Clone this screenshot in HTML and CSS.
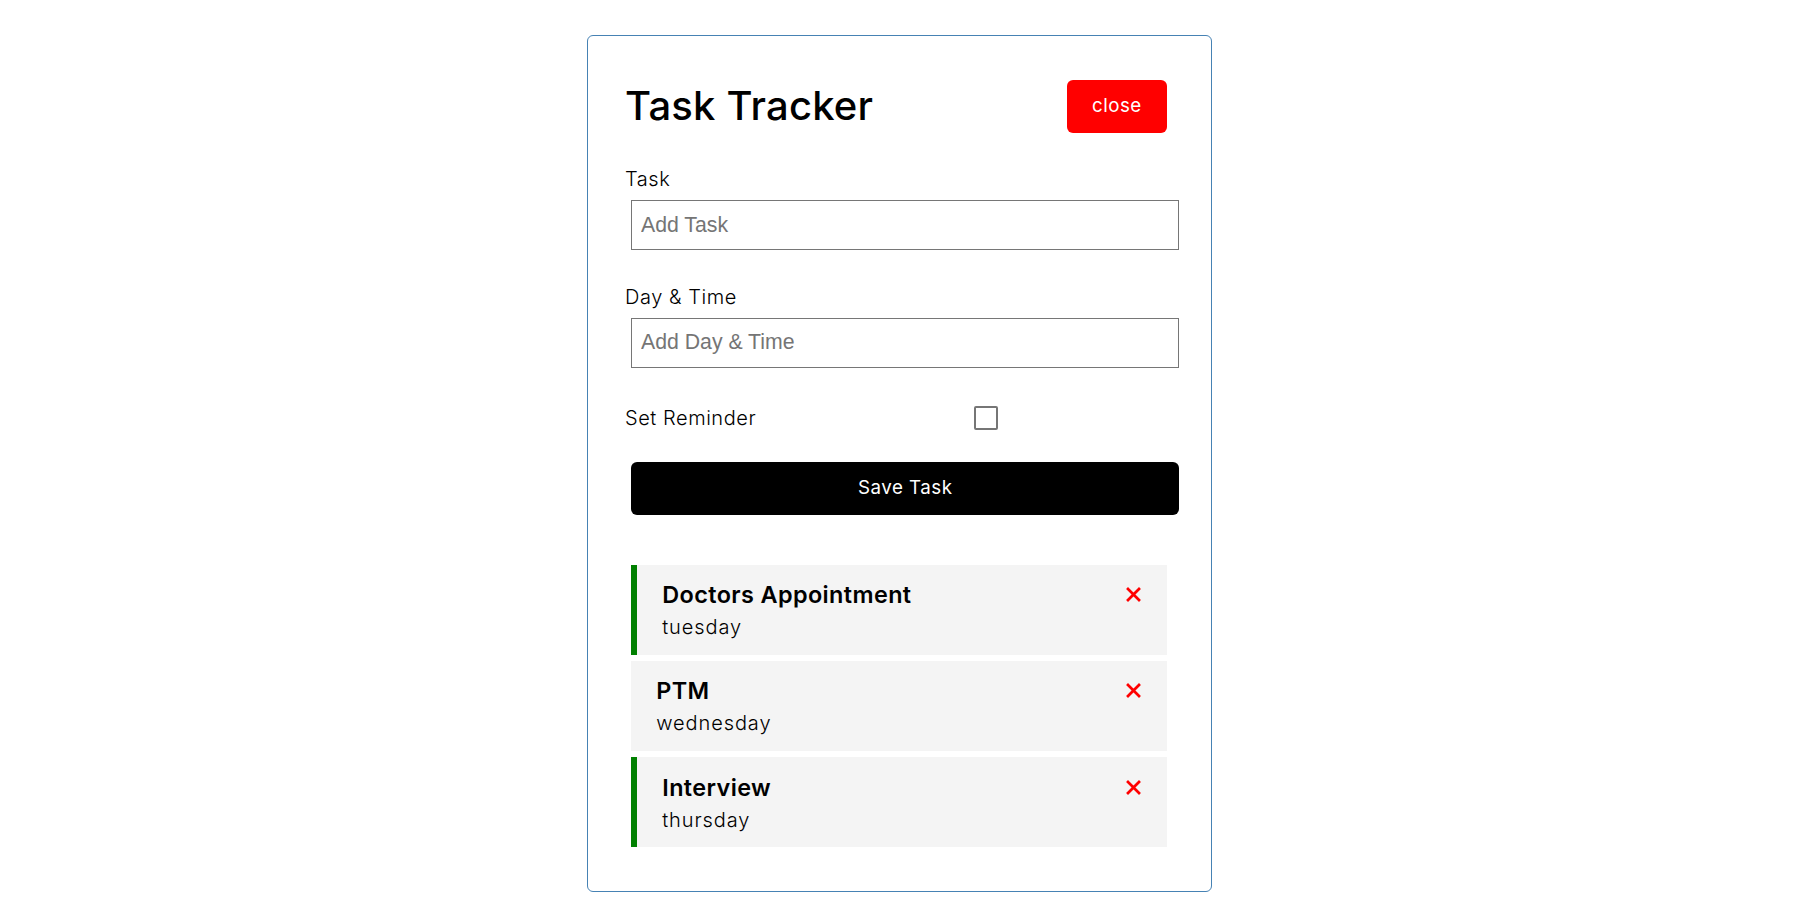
FILE: index.html
```html
<!DOCTYPE html>
<html lang="en">
<head>
<meta charset="utf-8">
<title>Task Tracker</title>
<link rel="stylesheet" href="styles.css">
</head>
<body>
<div class="container">
  <header class="header">
    <h1 class="title">Task Tracker</h1>
    <button class="btn btn-close" type="button">close</button>
  </header>

  <form class="add-form">
    <div class="form-control">
      <label class="field-label" for="task">Task</label>
      <input class="text-input" id="task" type="text" placeholder="Add Task">
    </div>
    <div class="form-control">
      <label class="field-label" for="day">Day &amp; Time</label>
      <input class="text-input" id="day" type="text" placeholder="Add Day &amp; Time">
    </div>
    <div class="form-control form-control-check">
      <label class="field-label check-label" for="rem">Set Reminder</label>
      <span class="check-wrap"><input class="check" id="rem" type="checkbox"></span>
    </div>
    <button class="btn btn-block" type="submit">Save Task</button>
  </form>

  <div class="tasks">
    <div class="task reminder">
      <h3 class="task-title">Doctors Appointment
        <svg class="del" viewBox="0 0 15 15" aria-hidden="true"><path d="M2 2L13 13M13 2L2 13"/></svg>
      </h3>
      <p class="task-day">tuesday</p>
    </div>
    <div class="task">
      <h3 class="task-title">PTM
        <svg class="del" viewBox="0 0 15 15" aria-hidden="true"><path d="M2 2L13 13M13 2L2 13"/></svg>
      </h3>
      <p class="task-day">wednesday</p>
    </div>
    <div class="task reminder">
      <h3 class="task-title">Interview
        <svg class="del" viewBox="0 0 15 15" aria-hidden="true"><path d="M2 2L13 13M13 2L2 13"/></svg>
      </h3>
      <p class="task-day">thursday</p>
    </div>
  </div>
</div>
</body>
</html>
```

FILE: styles.css
```css
* {
  box-sizing: border-box;
  margin: 0;
  padding: 0;
}

body {
  font-family: Inter, "Open Sans", sans-serif;
  color: #000;
  background: #fff;
  padding-right: 11px;
}

.container {
  width: 625px;
  margin: 35px auto 0;
  min-height: 375px;
  border: 1px solid #4682b4;
  border-radius: 6px;
  padding: 37.5px;
  overflow: auto;
}

.header {
  display: flex;
  justify-content: space-between;
  align-items: center;
  margin-bottom: 25px;
}

.title {
  font-size: 40px;
  line-height: 60px;
  font-weight: 500;
  letter-spacing: 0.2px;
}

.btn {
  display: inline-block;
  background: #000;
  color: #fff;
  border: none;
  padding: 12.5px 25px;
  margin: 6.25px;
  border-radius: 6px;
  font-family: inherit;
  font-size: 18.75px;
  line-height: 28px;
  letter-spacing: 0.5px;
  cursor: pointer;
}

.btn-close {
  background: #ff0000;
}

.btn-block {
  display: block;
  width: 100%;
}

.add-form {
  margin-bottom: 50px;
}

.form-control {
  display: flow-root;
  margin: 25px 0;
}

.field-label {
  display: block;
  font-size: 20px;
  line-height: 30px;
  font-weight: 300;
  letter-spacing: 0.55px;
}

.text-input {
  display: block;
  width: 100%;
  height: 50px;
  margin: 6.25px;
  padding: 3.75px 8.75px;
  border: 1px solid #767676;
  font-family: "Liberation Sans", Arial, sans-serif;
  font-size: 21.25px;
  color: #000;
  background: #fff;
}

.text-input::placeholder {
  color: #757575;
}

.form-control-check {
  display: flex;
  align-items: center;
  justify-content: space-between;
}

.check-label {
  flex: 1;
}

.check-wrap {
  flex: 2;
  display: flex;
  justify-content: center;
  align-items: center;
  height: 25px;
  margin: 6.25px;
}

.check {
  appearance: none;
  -webkit-appearance: none;
  width: 24px;
  height: 24px;
  border: 2px solid #767676;
  border-radius: 2px;
  background: #fff;
  margin: 0 4px 0 0;
}

.task {
  background: #f4f4f4;
  margin: 6.25px;
  padding: 12.5px 25px;
  cursor: pointer;
}

.task.reminder {
  border-left: 6.25px solid #008000;
}

.task-title {
  display: flex;
  align-items: center;
  justify-content: space-between;
  font-size: 23.4px;
  line-height: 35px;
  font-weight: 600;
  letter-spacing: 0.4px;
}

.del {
  width: 15px;
  height: 15px;
  fill: none;
  stroke: #ff0000;
  stroke-width: 2.7;
  stroke-linecap: square;
  margin-right: 1px;
}

.task-day {
  font-size: 20px;
  line-height: 30px;
  font-weight: 300;
  letter-spacing: 0.9px;
}
```
